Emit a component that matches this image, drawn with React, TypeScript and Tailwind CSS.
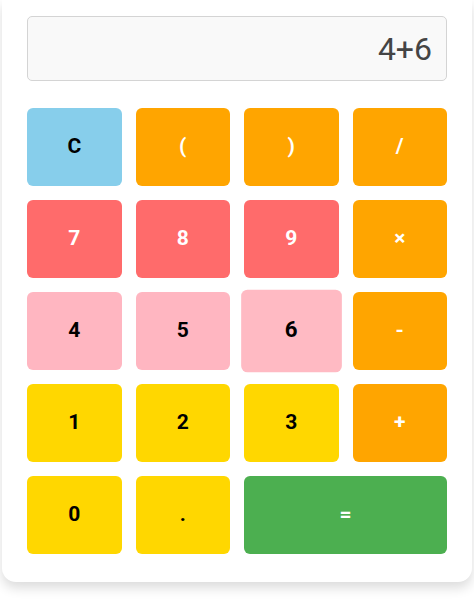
import React from "react";

type Btn = { label: string; cls: string; span?: boolean; active?: boolean };

const orange = "bg-[#FFA500] text-white";
const red = "bg-[#FF6B6B] text-white";
const pink = "bg-[#FFB6C1] text-black";
const yellow = "bg-[#FFD700] text-black";

const buttons: Btn[] = [
  { label: "C", cls: "bg-[#87CEEB] text-black" },
  { label: "(", cls: orange },
  { label: ")", cls: orange },
  { label: "/", cls: orange },
  { label: "7", cls: red },
  { label: "8", cls: red },
  { label: "9", cls: red },
  { label: "×", cls: orange },
  { label: "4", cls: pink },
  { label: "5", cls: pink },
  { label: "6", cls: "bg-[#FFBAC3] text-black", active: true },
  { label: "-", cls: orange },
  { label: "1", cls: yellow },
  { label: "2", cls: yellow },
  { label: "3", cls: yellow },
  { label: "+", cls: orange },
  { label: "0", cls: yellow },
  { label: ".", cls: yellow },
  { label: "=", cls: "bg-[#4CAF50] text-white", span: true },
];

export default function App() {
  return (
    <div className="min-h-[606px] w-[474px] bg-white" style={{ fontFamily: "Roboto, 'Liberation Sans', sans-serif" }}>
      <div className="mx-[2px] w-[470px] rounded-b-[14px] bg-white px-[25px] pb-[28px] pt-[16px] shadow-[0_6px_12px_rgba(0,0,0,0.14)]">
        <div className="flex h-[65px] items-center justify-end rounded-[5px] border border-[#d4d4d4] bg-[#f9f9f9] px-[14px] text-[32px] text-[#444]">
          4+6
        </div>
        <div className="mt-[27px] grid grid-cols-4 gap-[14px]">
          {buttons.map((b, i) => (
            <div
              key={i}
              className={`flex h-[78px] items-center justify-center rounded-[6px] text-[21px] font-bold ${b.cls} ${b.span ? "col-span-2" : ""} ${b.active ? "scale-[1.06]" : ""}`}
            >
              {b.label}
            </div>
          ))}
        </div>
      </div>
    </div>
  );
}
